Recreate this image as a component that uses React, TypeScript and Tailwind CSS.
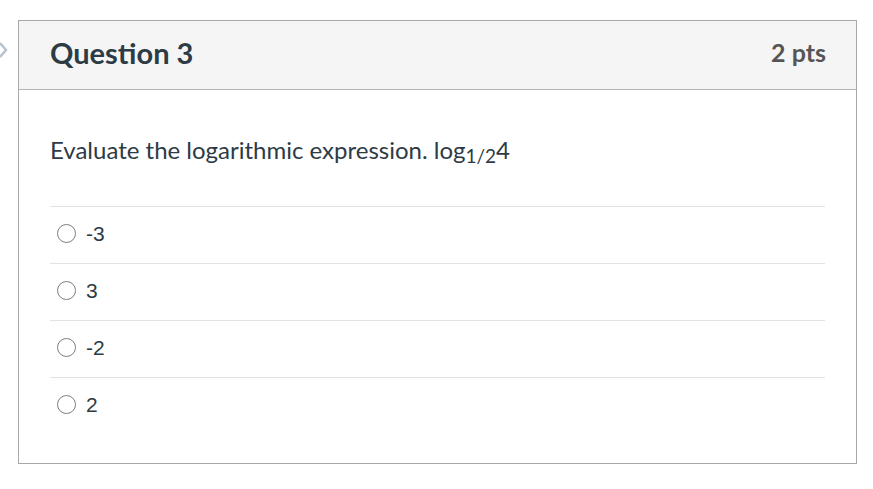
import React from 'react'

const ANSWERS = ['-3', '3', '-2', '2']

export default function App() {
  return (
    <div className="relative w-[873px] h-[489px] bg-white" style={{ fontFamily: 'Lato, "Liberation Sans", sans-serif' }}>
      {/* collapse arrow peeking from the left */}
      <svg className="absolute left-0 top-[42px]" width="8" height="16" viewBox="0 0 8 16">
        <path d="M0 1 L6 8 L0 15" fill="none" stroke="#b7c3cf" strokeWidth="2.5" />
      </svg>

      <div className="pt-[20px] pl-[18px]">
        <div className="w-[839px] h-[444px] border border-[#a8a8a8] flex flex-col">
          {/* Header */}
          <div className="h-[69px] shrink-0 bg-[#f5f5f5] border-b border-[#b5b5b5] flex items-center justify-between pl-[31px] pr-[30px] pb-[4px]">
            <h2 className="text-[29px] font-bold text-[#2d3b45]">Question 3</h2>
            <span className="text-[25px] font-bold text-[#555]">2 pts</span>
          </div>

          {/* Body */}
          <div className="px-[31px] pt-[45px]">
            <p className="text-[24px] text-[#2d3b45] leading-[30px]">
              Evaluate the logarithmic expression. log<span className="text-[19px] relative top-[4px]">1/2</span>4
            </p>

            <div className="mt-[39px]">
              {ANSWERS.map(a => (
                <label key={a} className="h-[57px] border-t border-[#e2e2e2] flex items-center gap-[10px] pl-[7px] pb-[3px]">
                  <span className="w-[19px] h-[19px] rounded-full border-[1.5px] border-[#7d7d7d] bg-white" />
                  <span className="text-[21px] text-[#2d3b45]" style={{ fontFamily: '"Liberation Sans", Arial, sans-serif' }}>{a}</span>
                </label>
              ))}
            </div>
          </div>
        </div>
      </div>
    </div>
  )
}
